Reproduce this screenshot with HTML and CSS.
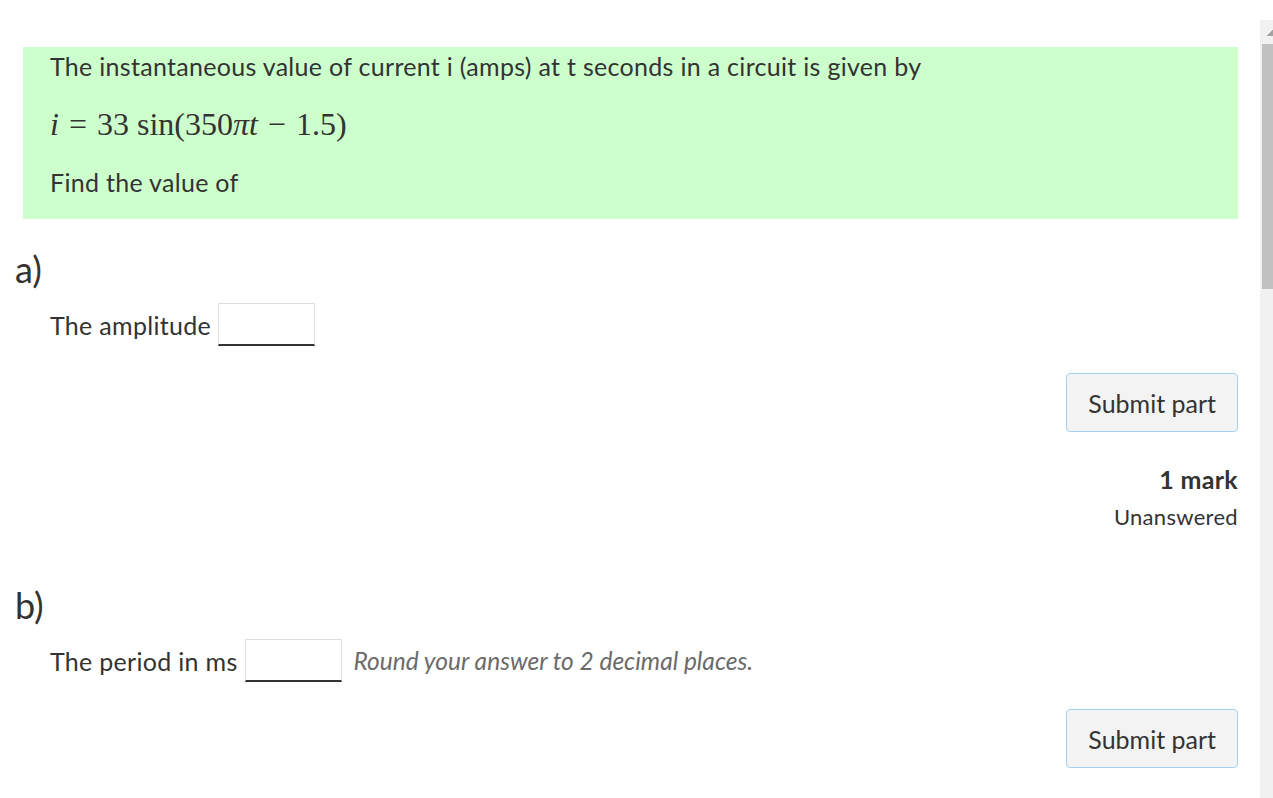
FILE: index.html
```html
<!DOCTYPE html>
<html lang="en">
<head>
  <meta charset="UTF-8">
  <meta name="viewport" content="width=device-width, initial-scale=1.0">
  <title>Question 1</title>
  <link rel="stylesheet" href="styles.css">
</head>
<body>

  <div class="window">
    <div class="viewport">
      <div class="question">

        <div class="statement">
          <p>The instantaneous value of current i (amps) at t seconds in a circuit is given by</p>
          <p class="math"><span class="mi">i</span><span class="mo">=</span>33<span class="fn">sin</span>(350<span class="mi">πt</span><span class="mo">−</span>1.5)</p>
          <p>Find the value of</p>
        </div>

        <div class="part">
          <h3 class="part-label">a)</h3>
          <div class="prompt">
            The amplitude <input type="text" class="answer">
          </div>
          <div class="submit-row">
            <button class="submit">Submit part</button>
          </div>
          <div class="feedback">
            <div class="marks">1 mark</div>
            <div class="status">Unanswered</div>
          </div>
        </div>

        <div class="part">
          <h3 class="part-label">b)</h3>
          <div class="prompt">
            The period in ms <input type="text" class="answer">
            <span class="hint">Round your answer to 2 decimal places.</span>
          </div>
          <div class="submit-row">
            <button class="submit">Submit part</button>
          </div>
        </div>

      </div>
    </div>

    <!-- scrollbar of the question pane -->
    <div class="scrollbar">
      <div class="scroll-up"></div>
      <div class="scroll-thumb"></div>
    </div>
  </div>

</body>
</html>
```

FILE: styles.css
```css
html, body {
  margin: 0;
  overflow: hidden;
  background-color: #fff;
}

body {
  font-family: Lato, "Noto Sans", sans-serif;
  font-size: 25px;
  letter-spacing: 0.3px;
  color: #333;
}

.window {
  display: flex;
  margin-top: 20px;
  height: 778px;
}

.viewport {
  flex: 1;
  overflow: hidden;
}

.scrollbar {
  width: 13px;
  display: flex;
  flex-direction: column;
  background-color: #f1f1f1;
}

.scroll-up {
  height: 24px;
  background: linear-gradient(to bottom right, transparent 50%, #a3a3a3 50%) no-repeat 7px 9px / 6px 7px;
}

.scroll-thumb {
  height: 245px;
  margin-left: 2px;
  background-color: #c1c1c1;
}

.question {
  padding: 27px 22px 0 15px;
}

.statement {
  margin-left: 8px;
  padding: 2px 27px 20px;
  background-color: #ccffcc;
}

.statement p {
  margin: 0;
  line-height: 34px;
}

.statement p + p {
  margin-top: 24px;
}

.math {
  font-family: "Liberation Serif", "DejaVu Serif", serif;
  font-size: 32px;
  letter-spacing: 0;
}

.math .mi {
  font-style: italic;
}

.math .mo {
  margin: 0 10px;
}

.math .fn {
  margin-left: 8px;
}

.part {
  padding-top: 30px;
  padding-bottom: 24px;
}

.part-label {
  margin: 0;
  font-size: 36px;
  font-weight: normal;
  line-height: 40px;
  letter-spacing: 0;
}

.prompt {
  margin-top: 14px;
  padding-left: 35px;
  display: flex;
  align-items: center;
  gap: 7px;
  height: 43px;
}

.answer {
  flex-shrink: 0;
  width: 97px;
  height: 43px;
  box-sizing: border-box;
  border: 1px solid #ddd;
  border-bottom: 2px solid #333;
  font: inherit;
  padding: 0 6px;
}

.hint {
  margin-left: 5px;
  font-size: 24.5px;
  font-style: italic;
  letter-spacing: 0;
  color: #6b6b6b;
}

.submit-row {
  margin-top: 27px;
  display: flex;
  justify-content: flex-end;
}

.submit {
  height: 59px;
  padding: 0 21px;
  font: inherit;
  color: #333;
  background-color: #f3f3f3;
  border: 1px solid #a6d0ef;
  border-radius: 4px;
}

.feedback {
  text-align: right;
  margin-top: 32px;
}

.marks {
  font-weight: bold;
  line-height: 30px;
}

.status {
  margin-top: 9px;
  font-size: 22px;
  line-height: 28px;
}
```
